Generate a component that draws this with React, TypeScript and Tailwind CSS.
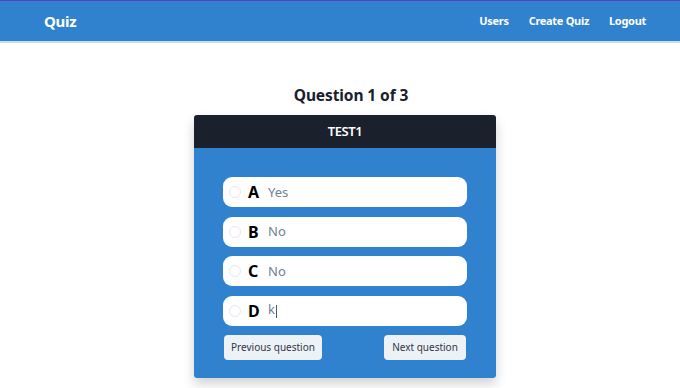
import React from "react";

const options = [
  { letter: "A", text: "Yes" },
  { letter: "B", text: "No" },
  { letter: "C", text: "No" },
  { letter: "D", text: "k" },
];

export default function App() {
  return (
    <div className="h-screen overflow-hidden bg-white" style={{ fontFamily: '"Noto Sans", "Open Sans", sans-serif' }}>
      <nav className="h-[43px] bg-[#3182ce] border-t border-t-[#5a3fc0] border-b-2 border-b-[#c9dcf0] flex items-center justify-between pl-[44px] pr-[34px]">
        <span className="text-white font-bold text-[15px] tracking-[-0.3px]">Quiz</span>
        <div className="flex items-center gap-[20px] text-white font-bold text-[11px] tracking-[-0.3px]">
          <span>Users</span>
          <span>Create Quiz</span>
          <span>Logout</span>
        </div>
      </nav>
      <div className="flex flex-col items-center pl-[10px]">
        <h1 className="mt-[42px] ml-[12px] text-[15.5px] font-bold text-[#1a202c] leading-[20px] tracking-[-0.1px]">Question 1 of 3</h1>
        <div className="mt-[10px] w-[302px] rounded-[3px] overflow-hidden shadow-[0_6px_12px_rgba(0,0,0,0.18)]">
          <div className="h-[33px] bg-[#1a202c] flex items-center justify-center text-white text-[13px] font-semibold tracking-[-0.4px]">
            TEST1
          </div>
          <div className="bg-[#3182ce] pt-[29px] pb-[18px] px-[29px] flex flex-col">
            <div className="flex flex-col gap-[9.5px]">
              {options.map((o) => (
                <div key={o.letter} className="h-[30px] bg-white rounded-[9px] flex items-center pl-[6px]">
                  <span className="w-[12px] h-[12px] rounded-full border border-[#e2e8f0]" />
                  <span className="ml-[7px] w-[20px] text-[16px] font-bold text-black leading-none">{o.letter}</span>
                  <span className="text-[13px] text-[#718096] leading-none">
                    {o.text}
                    {o.letter === "D" && <span className="inline-block w-px h-[13px] bg-[#555] align-middle ml-px" />}
                  </span>
                </div>
              ))}
            </div>
            <div className="mt-[9px] flex justify-between px-[1px]">
              <button className="h-[25px] w-[98px] bg-[#edf2f7] rounded-[4px] text-[10px] text-[#2d3748]">Previous question</button>
              <button className="h-[25px] w-[82px] bg-[#edf2f7] rounded-[4px] text-[10px] text-[#2d3748]">Next question</button>
            </div>
          </div>
        </div>
      </div>
    </div>
  );
}
